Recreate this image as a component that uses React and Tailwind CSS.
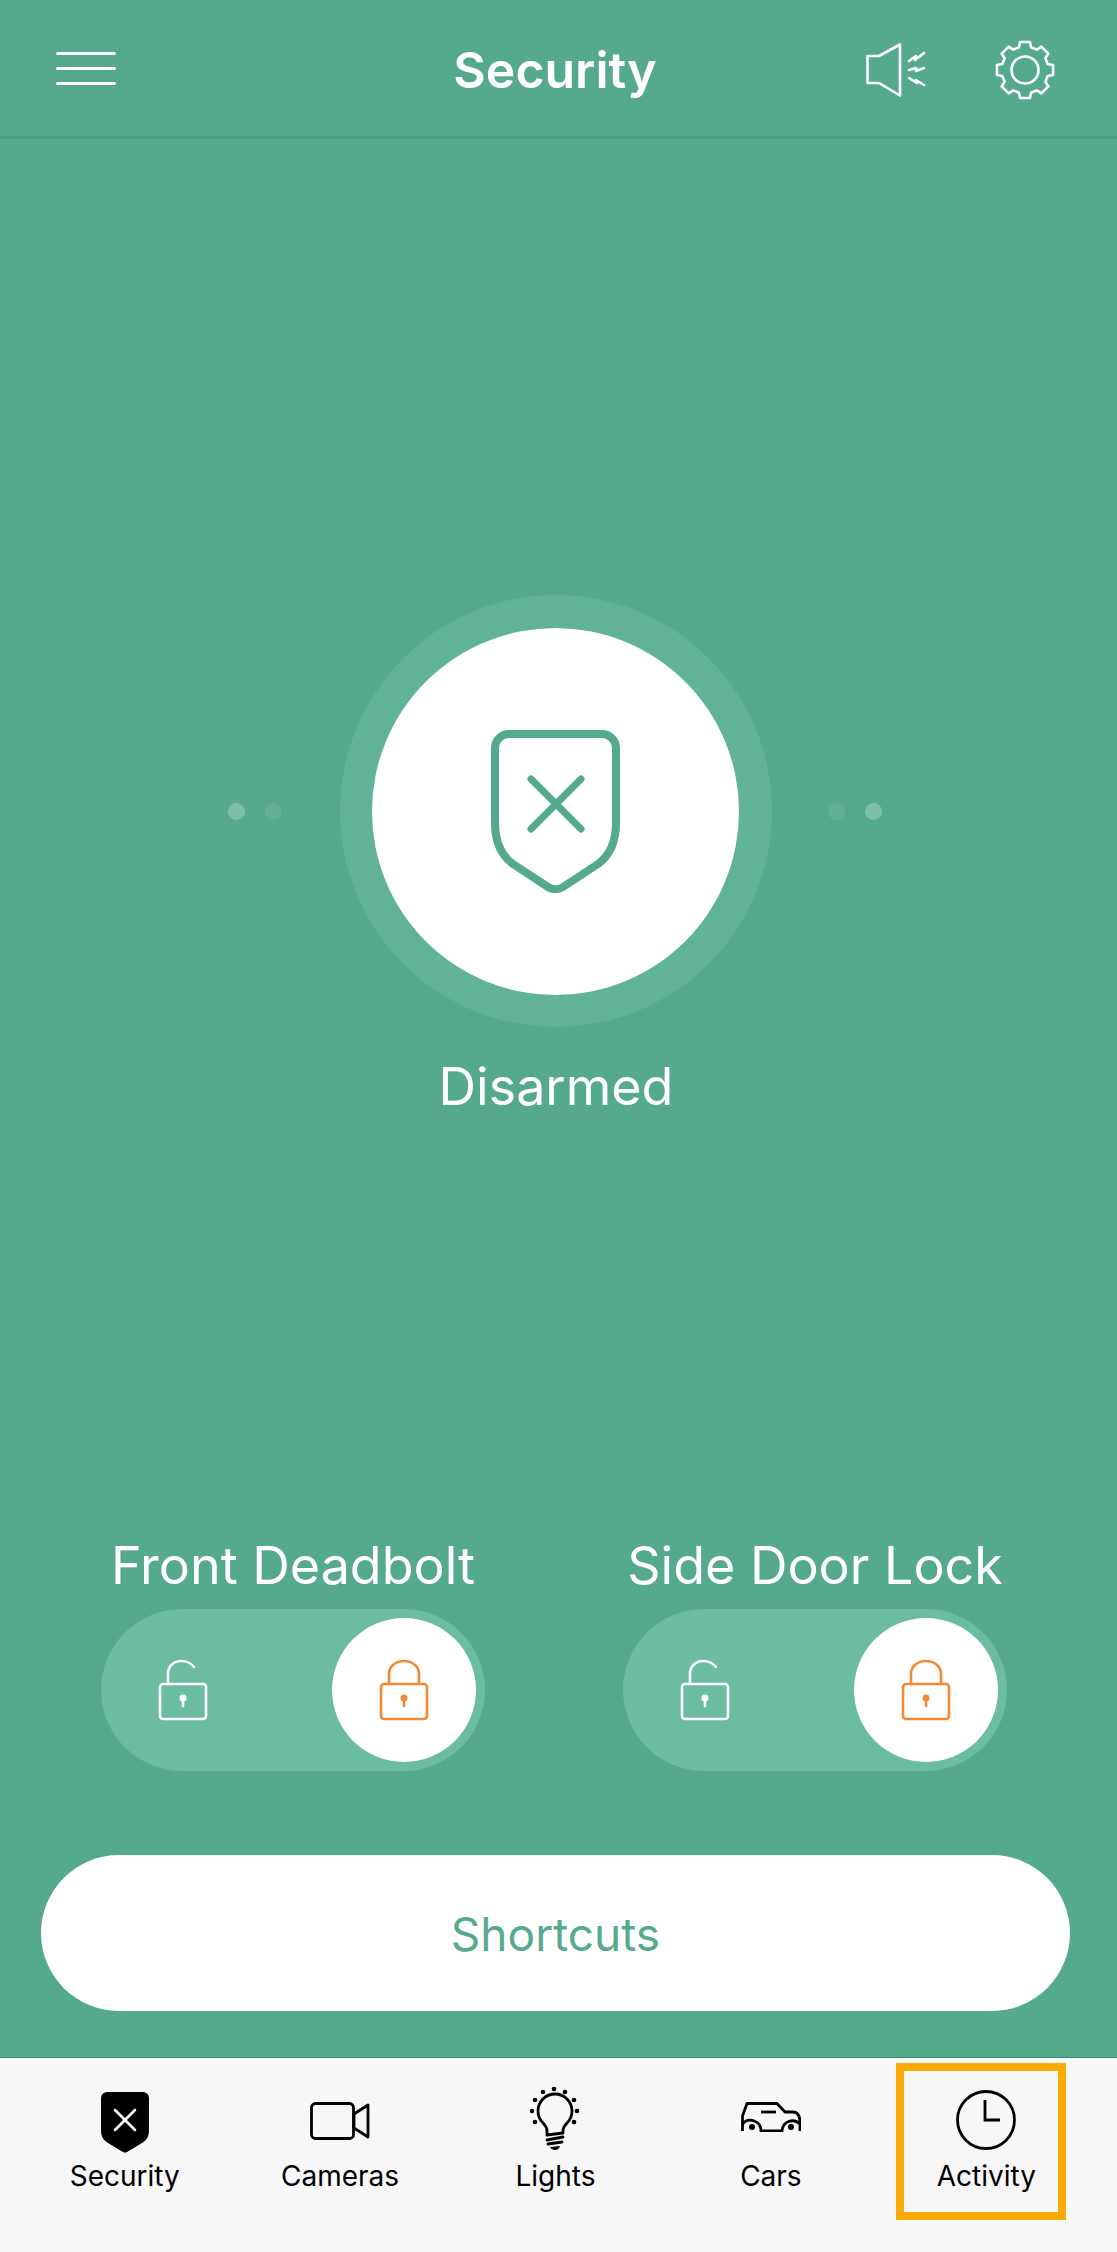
const FONT = 'font-["Inter",sans-serif]';

function SpeakerIcon() {
  return (
    <svg width="60" height="54" viewBox="0 0 60 54" fill="none" stroke="white" strokeWidth="2.6" strokeLinecap="round" strokeLinejoin="round">
      <path d="M1.5 13H13L34 1.5v51L13 40H1.5z" />
      <path d="M43 18l7-5-1 4 9-7M43 27l7-2 0 3 8-3M43 35l8 5-1-3 8 5" />
    </svg>
  );
}

// 8 teeth around a ring, worked out once instead of a long hand-typed path
function gearPath() {
  const pt = (r, deg) => {
    const a = (deg * Math.PI) / 180;
    return `${(30 + r * Math.cos(a)).toFixed(2)} ${(30 + r * Math.sin(a)).toFixed(2)}`;
  };
  let d = '';
  for (let i = 0; i < 8; i++) {
    const c = i * 45 - 90;
    d += `${i === 0 ? 'M' : 'L'}${pt(23.5, c - 15)} L${pt(28.5, c - 10)} L${pt(28.5, c + 10)} L${pt(23.5, c + 15)} `;
  }
  return d + 'Z';
}

function GearIcon() {
  return (
    <svg width="60" height="60" viewBox="0 0 60 60" fill="none" stroke="white" strokeWidth="2.6" strokeLinejoin="round">
      <path d={gearPath()} />
      <circle cx="30" cy="30" r="13.5" />
    </svg>
  );
}

function ShieldOff() {
  return (
    <svg width="129" height="163" viewBox="0 0 129 163" fill="none" stroke="#55aa8c" strokeWidth="8" strokeLinecap="round" strokeLinejoin="round">
      <path d="M18 4h93a14 14 0 0 1 14 14v75c0 20-7 33-18 41l-35 23a14 14 0 0 1-15 0l-35-23C11 126 4 113 4 93V18A14 14 0 0 1 18 4z" />
      <path d="M40 49l50 50M90 49l-50 50" strokeWidth="7" />
    </svg>
  );
}

function LockIcon({ open, color }) {
  return (
    <svg width="50" height="62" viewBox="0 0 50 62" fill="none" stroke={color} strokeWidth="2.6" strokeLinecap="round" strokeLinejoin="round">
      {open
        ? <path d="M10 25V15C10 7 16 2 23 2c6 0 10 2 13 6" />
        : <path d="M10 25V15C10 7 17 2 25 2s15 5 15 13v10" />}
      <rect x="2" y="25" width="46" height="35" rx="3" />
      <circle cx="25" cy="39" r="2.2" fill={color} />
      <path d="M25 40v7" />
    </svg>
  );
}

function LockToggle({ label }) {
  return (
    <div className="flex flex-col items-center w-[384px]">
      <div className="text-[52px] leading-[58px] text-white whitespace-nowrap">{label}</div>
      <div className="relative mt-[14px] h-[162px] w-[384px] rounded-full bg-[#6cbba3] flex items-center pl-[57px] pr-[9px] justify-between">
        <LockIcon open color="white" />
        <div className="w-[144px] h-[144px] rounded-full bg-white flex items-center justify-center">
          <LockIcon color="#f28a35" />
        </div>
      </div>
    </div>
  );
}

const tabs = [
  {
    label: 'Security',
    top: 'mt-[8px]',
    icon: (
      <svg width="48" height="61" viewBox="0 0 48 61">
        <path d="M6 0h36a6 6 0 0 1 6 6v32c0 6-2 10-7 13L26 60a4 4 0 0 1-4 0L7 51c-5-3-7-7-7-13V6a6 6 0 0 1 6-6z" fill="black" />
        <path d="M14 18l20 20M34 18L14 38" stroke="white" strokeWidth="2.6" strokeLinecap="round" />
      </svg>
    ),
  },
  {
    label: 'Cameras',
    top: 'mt-[18px]',
    icon: (
      <svg width="60" height="38" viewBox="0 0 60 38" fill="none" stroke="black" strokeWidth="2.8" strokeLinejoin="round">
        <rect x="1.5" y="1.5" width="42" height="35" rx="4" />
        <path d="M44 12l14-9v32l-14-9z" />
      </svg>
    ),
  },
  {
    label: 'Lights',
    top: 'mt-[3px]',
    icon: (
      <svg width="50" height="64" viewBox="0 0 50 64" fill="none" stroke="black" strokeWidth="2.8" strokeLinecap="round" strokeLinejoin="round">
        <path d="M17 48v-4c0-3-1-5-4-8-3-3-5-7-5-12a17 17 0 0 1 34 0c0 5-2 9-5 12-3 3-4 5-4 8v2z" />
        <path d="M17 53l16-3M18 57l14-2" />
        <path d="M20 60l10-1c-1 3-3 4-5 4s-4-1-5-3z" fill="black" stroke="none" />
        <g fill="black" stroke="none">
          <circle cx="2" cy="24" r="2.3" /><circle cx="5" cy="13" r="2.3" /><circle cx="5" cy="35" r="2.3" />
          <circle cx="13" cy="5" r="2.3" /><circle cx="24" cy="2" r="2.3" /><circle cx="35" cy="5" r="2.3" />
          <circle cx="44" cy="13" r="2.3" /><circle cx="47" cy="24" r="2.3" /><circle cx="44" cy="35" r="2.3" />
        </g>
      </svg>
    ),
  },
  {
    label: 'Cars',
    top: 'mt-[18px]',
    icon: (
      <svg width="60" height="30" viewBox="0 0 60 30" fill="none" stroke="black" strokeWidth="2.8" strokeLinejoin="round">
        <path d="M1.5 29V14L6 1.5h30L44 10h8c5 0 7 5 7 11v8" />
        <path d="M1.5 22A10.5 10.5 0 0 1 20 29h21a10.5 10.5 0 0 1 18-7" />
        <path d="M20 10h15" />
        <g fill="black" stroke="none"><circle cx="11" cy="25" r="3" /><circle cx="50" cy="25" r="3" /></g>
      </svg>
    ),
  },
  {
    label: 'Activity',
    top: 'mt-[6px]',
    icon: (
      <svg width="60" height="60" viewBox="0 0 60 60" fill="none" stroke="black" strokeWidth="2.8">
        <circle cx="30" cy="30" r="28.5" />
        <path d="M29 10v20h15" />
      </svg>
    ),
  },
];

export default function App() {
  return (
    <div className={`${FONT} relative w-[1117px] h-[2252px] flex flex-col bg-[#55aa8c]`}>
      <header className="h-[139px] shrink-0 border-b-[3px] border-[#4b9d80] flex items-center pl-[56px] pr-[62px]">
        <div className="flex flex-col gap-[12px] w-[60px]">
          <div className="h-[3px] bg-white rounded-full" />
          <div className="h-[3px] bg-white rounded-full" />
          <div className="h-[3px] bg-white rounded-full" />
        </div>
        <div className="flex-1 text-center text-white font-semibold text-[50px] leading-none pl-[128px] mt-[3px]">Security</div>
        <div className="flex items-center gap-[69px] mt-[4px]">
          <SpeakerIcon />
          <GearIcon />
        </div>
      </header>

      <main className="flex-1 flex flex-col items-center">
        <div className="mt-[456px] flex items-center justify-center w-full pr-[7px]">
          <div className="flex gap-[20px] mr-[58px]">
            <div className="w-[17px] h-[17px] rounded-full bg-[#7fbfa9]" />
            <div className="w-[17px] h-[17px] rounded-full bg-[#63b097]" />
          </div>
          <div className="w-[432px] h-[432px] rounded-full bg-[#61b398] flex items-center justify-center pr-[1px]">
            <div className="w-[367px] h-[367px] rounded-full bg-white flex items-center justify-center">
              <ShieldOff />
            </div>
          </div>
          <div className="flex gap-[20px] ml-[56px]">
            <div className="w-[17px] h-[17px] rounded-full bg-[#63b097]" />
            <div className="w-[17px] h-[17px] rounded-full bg-[#7fbfa9]" />
          </div>
        </div>
        <div className="mt-[29px] text-white text-[52px] leading-[62px] pr-[5px]">Disarmed</div>

        <div className="mt-auto w-full flex pl-[101px] gap-[138px]">
          <LockToggle label="Front Deadbolt" />
          <LockToggle label="Side Door Lock" />
        </div>
        <button className="mt-[84px] mb-[46px] mr-[6px] w-[1029px] h-[156px] rounded-full bg-white text-[#55aa8c] text-[46px] pt-[2px]">
          Shortcuts
        </button>
      </main>

      <nav className="h-[195px] shrink-0 bg-[#f7f7f7] border-t border-[#3e8a70] grid grid-cols-5 pl-[17px] pr-[23px]">
        {tabs.map(tab => (
          <div key={tab.label} className="flex flex-col items-center">
            <div className="h-[70px] mt-[26px] flex items-start justify-center">
              <div className={tab.top}>{tab.icon}</div>
            </div>
            <div className="mt-[4px] text-[28px] leading-[36px] text-black">{tab.label}</div>
          </div>
        ))}
      </nav>

      <div className="absolute left-[896px] top-[2063px] w-[170px] h-[157px] border-[8px] border-[#f9aa05]" />
    </div>
  );
}
